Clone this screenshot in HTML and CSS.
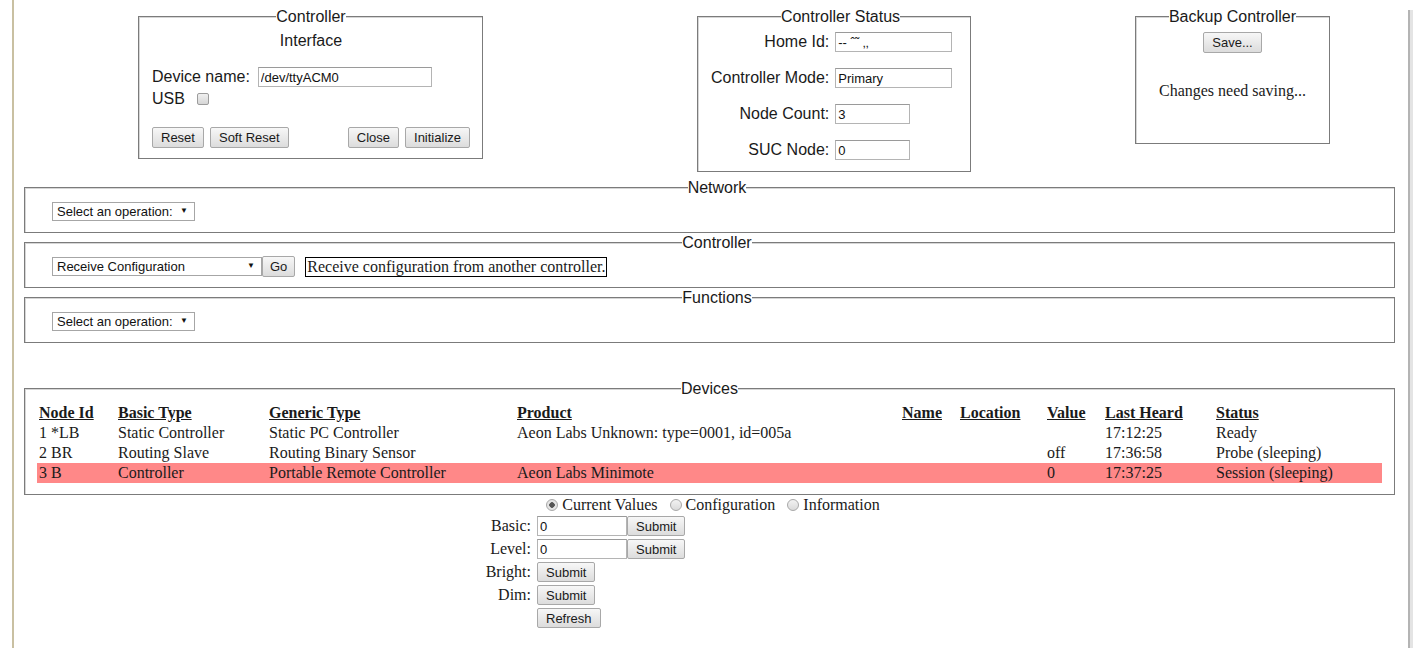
FILE: index.html
```html
<!DOCTYPE html>
<html lang="en">

<head>
    <meta charset="UTF-8">
    <meta name="viewport" content="width=device-width, initial-scale=1.0">
    <title>OpenZWave Control Panel</title>
    <link rel="stylesheet" href="styles.css">
</head>

<body>
    <div class="frame">
        <div class="gutter"></div>

        <div class="page">
            <!-- top row: interface / status / backup -->
            <div class="top-row">
                <fieldset class="box box-iface">
                    <legend>Controller</legend>
                    <div class="iface-title">Interface</div>
                    <div class="field-row">
                        <span>Device name:</span>
                        <input class="text dev-name" type="text" value="/dev/ttyACM0">
                    </div>
                    <div class="field-row">
                        <span>USB</span>
                        <input class="check" type="checkbox">
                    </div>
                    <div class="btn-row">
                        <div class="btn-group">
                            <button class="btn">Reset</button>
                            <button class="btn">Soft Reset</button>
                        </div>
                        <div class="btn-group">
                            <button class="btn">Close</button>
                            <button class="btn">Initialize</button>
                        </div>
                    </div>
                </fieldset>

                <fieldset class="box box-status">
                    <legend>Controller Status</legend>
                    <div class="status-grid">
                        <label>Home Id:</label>
                        <input class="text wide hidden-id" type="text" value="-‑ ˆ˜ ‚‚">
                        <label>Controller Mode:</label>
                        <input class="text wide" type="text" value="Primary">
                        <label>Node Count:</label>
                        <input class="text narrow" type="text" value="3">
                        <label>SUC Node:</label>
                        <input class="text narrow" type="text" value="0">
                    </div>
                </fieldset>

                <fieldset class="box box-backup">
                    <legend>Backup Controller</legend>
                    <button class="btn save-btn">Save...</button>
                    <p class="note">Changes need saving...</p>
                </fieldset>
            </div>

            <!-- operations -->
            <fieldset class="box section">
                <legend>Network</legend>
                <div class="op-row">
                    <div class="select op-select">
                        <select><option>Select an operation:</option></select>
                    </div>
                </div>
            </fieldset>

            <fieldset class="box section">
                <legend>Controller</legend>
                <div class="op-row">
                    <div class="select cmd-select">
                        <select><option>Receive Configuration</option></select>
                    </div>
                    <button class="btn go-btn">Go</button>
                    <span class="msg">Receive configuration from another controller.</span>
                </div>
            </fieldset>

            <fieldset class="box section">
                <legend>Functions</legend>
                <div class="op-row">
                    <div class="select op-select">
                        <select><option>Select an operation:</option></select>
                    </div>
                </div>
            </fieldset>

            <!-- devices -->
            <fieldset class="box devices">
                <legend>Devices</legend>
                <table class="dev-table">
                    <colgroup>
                        <col style="width:79px">
                        <col style="width:151px">
                        <col style="width:248px">
                        <col style="width:385px">
                        <col style="width:58px">
                        <col style="width:87px">
                        <col style="width:58px">
                        <col style="width:111px">
                        <col>
                    </colgroup>
                    <thead>
                        <tr>
                            <th>Node Id</th>
                            <th>Basic Type</th>
                            <th>Generic Type</th>
                            <th>Product</th>
                            <th>Name</th>
                            <th>Location</th>
                            <th>Value</th>
                            <th>Last Heard</th>
                            <th>Status</th>
                        </tr>
                    </thead>
                    <tbody>
                        <tr>
                            <td>1 *LB</td>
                            <td>Static Controller</td>
                            <td>Static PC Controller</td>
                            <td>Aeon Labs Unknown: type=0001, id=005a</td>
                            <td></td>
                            <td></td>
                            <td></td>
                            <td>17:12:25</td>
                            <td>Ready</td>
                        </tr>
                        <tr>
                            <td>2 BR</td>
                            <td>Routing Slave</td>
                            <td>Routing Binary Sensor</td>
                            <td></td>
                            <td></td>
                            <td></td>
                            <td>off</td>
                            <td>17:36:58</td>
                            <td>Probe (sleeping)</td>
                        </tr>
                        <tr class="selected">
                            <td>3 B</td>
                            <td>Controller</td>
                            <td>Portable Remote Controller</td>
                            <td>Aeon Labs Minimote</td>
                            <td></td>
                            <td></td>
                            <td>0</td>
                            <td>17:37:25</td>
                            <td>Session (sleeping)</td>
                        </tr>
                    </tbody>
                </table>
            </fieldset>

            <!-- node details -->
            <div class="view-tabs">
                <label><input class="radio" type="radio" name="view" checked>Current Values</label>
                <label><input class="radio" type="radio" name="view">Configuration</label>
                <label><input class="radio" type="radio" name="view">Information</label>
            </div>

            <div class="values">
                <span class="v-label">Basic:</span>
                <div class="v-field"><input class="text val" type="text" value="0"><button class="btn">Submit</button></div>
                <span class="v-label">Level:</span>
                <div class="v-field"><input class="text val" type="text" value="0"><button class="btn">Submit</button></div>
                <span class="v-label">Bright:</span>
                <div class="v-field"><button class="btn">Submit</button></div>
                <span class="v-label">Dim:</span>
                <div class="v-field"><button class="btn">Submit</button></div>
                <span></span>
                <div class="v-field"><button class="btn">Refresh</button></div>
            </div>
        </div>

        <div class="edge"></div>
    </div>
</body>

</html>
```

FILE: styles.css
```css
* {
    box-sizing: border-box;
}

body {
    margin: 0;
    font-family: "Liberation Sans", Arial, sans-serif;
    font-size: 16px;
    color: #1a1a1a;
    background: #fff;
}

.frame {
    display: flex;
    min-height: 648px;
}

.gutter {
    width: 14px;
    flex: none;
    border-right: 2px solid #c9c0a2;
}

.page {
    flex: 1;
    min-width: 0;
    padding-top: 7px;
}

.edge {
    width: 5px;
    flex: none;
    margin-top: 10px;
    background: #e4e4e4;
    border-left: 2px solid #b4b4b4;
}

/* fieldsets */
.box {
    margin: 0;
    padding: 0;
    min-width: 0;
    border: 1px solid #7b7b7b;
    box-shadow: inset 1px 1px 0 #d6d6d6;
}

.box legend {
    position: relative;
    top: 1px;
    margin: 0 auto;
    padding: 0;
    font-size: 16px;
    line-height: 18px;
    background: #fff;
}

/* top row */
.top-row {
    display: flex;
    padding-left: 124px;
}

.box-iface {
    width: 345px;
    height: 152px;
    margin-right: 214px;
    padding: 0 12px 0 13px;
}

.iface-title {
    text-align: center;
    line-height: 18px;
    margin-top: 7px;
}

.field-row {
    display: flex;
    align-items: center;
    height: 22px;
}

.iface-title + .field-row {
    margin-top: 16px;
}

.dev-name {
    width: 174px;
    margin-left: 8px;
}

.btn-row {
    display: flex;
    justify-content: space-between;
    margin-top: 17px;
}

.btn-group {
    display: flex;
    gap: 6px;
}

.box-status {
    width: 274px;
    height: 165px;
    margin-right: 164px;
    padding: 0 0 0 13px;
}

.status-grid {
    display: grid;
    grid-template-columns: auto auto;
    justify-content: start;
    align-items: center;
    column-gap: 6px;
    row-gap: 16px;
    margin-top: 7px;
}

.status-grid label {
    text-align: right;
}

.wide {
    width: 117px;
}

.narrow {
    width: 75px;
}

.hidden-id {
    color: #666;
}

.box-backup {
    width: 195px;
    height: 137px;
    text-align: center;
}

.save-btn {
    margin-top: 7px;
}

.note {
    margin: 29px 0 0;
    font-family: "Liberation Serif", "Times New Roman", serif;
    line-height: 18px;
}

/* controls */
.text {
    height: 20px;
    padding: 0 2px;
    border: 1px solid #b4b4b4;
    border-top-color: #9a9a9a;
    font: 13px "Liberation Sans", Arial, sans-serif;
    color: #111;
    background: #fff;
}

.btn {
    height: 21px;
    padding: 0 8px;
    border: 1px solid #a8a8a8;
    border-radius: 2px;
    background: linear-gradient(#f7f7f7, #dcdcdc);
    font: 13px "Liberation Sans", Arial, sans-serif;
    color: #1a1a1a;
}

.check {
    appearance: none;
    width: 12px;
    height: 12px;
    margin: 0 0 0 12px;
    border: 1px solid #9c9c9c;
    border-radius: 2px;
    background: linear-gradient(#f0f0f0, #d6d6d6);
}

.radio {
    appearance: none;
    width: 12px;
    height: 12px;
    margin: 0 4px 0 8px;
    border: 1px solid #a8a8a8;
    border-radius: 50%;
    background: linear-gradient(#f2f2f2, #dadada);
    vertical-align: -1px;
}

.radio:checked {
    background: radial-gradient(circle, #555 0 2.5px, #e4e4e4 3px);
}

.select {
    position: relative;
    height: 19px;
}

.select select {
    appearance: none;
    width: 100%;
    height: 19px;
    padding: 0 0 0 4px;
    border: 1px solid #a6a6a6;
    background: #fff;
    font: 13px "Liberation Sans", Arial, sans-serif;
    color: #111;
}

.select::after {
    content: "\25BC";
    position: absolute;
    right: 7px;
    top: 4px;
    font-size: 8px;
    line-height: 10px;
    color: #111;
    pointer-events: none;
}

/* operation sections */
.section {
    height: 55px;
    margin: 0 13px 0 10px;
    padding: 0 12px 0 27px;
}

.top-row + .section {
    margin-top: 6px;
}

.op-row {
    display: flex;
    align-items: center;
    height: 21px;
    margin-top: 5px;
}

.op-select {
    width: 143px;
}

.cmd-select {
    width: 210px;
}

.go-btn {
    padding: 0 7px;
}

.msg {
    margin-left: 10px;
    height: 20px;
    padding: 0 1px;
    border: 1px solid #000;
    font-family: "Liberation Serif", "Times New Roman", serif;
    line-height: 18px;
}

/* devices */
.devices {
    height: 116px;
    margin: 36px 13px 0 10px;
    padding: 0 12px;
}

.dev-table {
    width: 100%;
    margin-top: 6px;
    table-layout: fixed;
    border-spacing: 0;
    font-family: "Liberation Serif", "Times New Roman", serif;
    font-size: 16px;
}

.dev-table th,
.dev-table td {
    height: 20px;
    padding: 0 0 0 2px;
    line-height: 20px;
    text-align: left;
    white-space: nowrap;
}

.dev-table th {
    font-weight: bold;
    text-decoration: underline;
}

.dev-table .selected td {
    background: #ff8888;
}

/* node values */
.view-tabs {
    text-align: center;
    line-height: 20px;
    font-family: "Liberation Serif", "Times New Roman", serif;
    padding-left: 4px;
}

.view-tabs .radio {
    margin-right: 4px;
}

.view-tabs label:first-child .radio {
    margin-left: 0;
}

.values {
    display: grid;
    grid-template-columns: 61px auto;
    justify-content: start;
    column-gap: 6px;
    row-gap: 3px;
    margin: 1px 0 0 456px;
    font-family: "Liberation Serif", "Times New Roman", serif;
}

.v-label {
    text-align: right;
    line-height: 20px;
}

.v-field {
    display: flex;
    height: 20px;
}

.v-field .btn {
    height: 20px;
}

.val {
    width: 90px;
}
```
